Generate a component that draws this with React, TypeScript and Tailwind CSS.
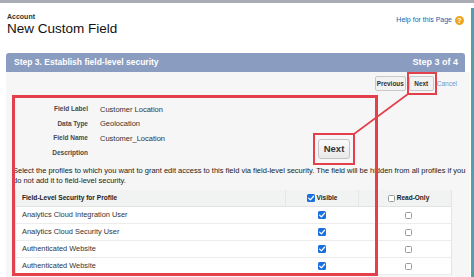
import React from "react";

const Checked = () => (
  <span className="inline-flex w-[8px] h-[8px] rounded-[1.5px] bg-[#1a6fe0] items-center justify-center">
    <svg viewBox="0 0 10 10" className="w-[8px] h-[8px]">
      <path d="M2 5.2 L4.2 7.3 L8.2 2.8" fill="none" stroke="#fff" strokeWidth="1.6" strokeLinecap="round" strokeLinejoin="round" />
    </svg>
  </span>
);

const Unchecked = () => (
  <span className="inline-block w-[7px] h-[7px] rounded-[1.5px] border border-[#9a9a9a] bg-white" />
);

const rows = [
  "Analytics Cloud Integration User",
  "Analytics Cloud Security User",
  "Authenticated Website",
  "Authenticated Website",
];

const fields: [string, string][] = [
  ["Field Label", "Customer Location"],
  ["Data Type", "Geolocation"],
  ["Field Name", "Customer_Location"],
  ["Description", ""],
];

export default function App() {
  return (
    <div
      className="relative w-[474px] h-[277px] overflow-hidden bg-white flex flex-col"
      style={{ fontFamily: '"Liberation Sans", Arial, sans-serif' }}
    >
      <div className="h-[3px] bg-[#a9adb3] shrink-0" />
      <div className="flex flex-1">
        <div className="w-[471px] flex flex-col">
          {/* header */}
          <div className="flex justify-between items-start pt-[10px] pl-[7px] pr-[7px]">
            <div className="flex flex-col">
              <div className="text-[7px] leading-[8px] text-[#333] font-bold">Account</div>
              <div className="text-[13.5px] leading-[16px] text-[#111]">New Custom Field</div>
            </div>
            <div className="flex items-center gap-[3px] h-[14px]">
              <span className="text-[7px] text-[#1d5ea8]">Help for this Page</span>
              <span className="w-[9px] h-[9px] rounded-full bg-[#eea41c] text-white text-[7px] font-bold leading-[9px] text-center">?</span>
            </div>
          </div>
          {/* step bar */}
          <div className="mt-[16px] ml-[6px] w-[459px] h-[19px] bg-[#8a9cc0] rounded-t-[3px] flex items-center justify-between pl-[8px] pr-[7px]">
            <span className="text-[8.5px] font-bold text-white">Step 3. Establish field-level security</span>
            <span className="text-[9px] font-bold text-white">Step 3 of 4</span>
          </div>
          {/* body */}
          <div className="ml-[6px] w-[464px] flex-1 bg-[#f6f6f6] flex flex-col">
            <div className="mt-[4px] h-[15px] flex items-center justify-end gap-[3px] pr-[13px]">
              <span className="h-[15px] w-[31px] flex items-center justify-center rounded-[2px] border border-[#c8c8c8] bg-[#f2f2f2] text-[6.4px] font-bold text-[#333]">Previous</span>
              <span className="h-[15px] w-[25px] flex items-center justify-center rounded-[2px] border border-[#c8c8c8] bg-[#f2f2f2] text-[6.4px] font-bold text-[#333]">Next</span>
              <span className="text-[6.5px] text-[#6d97d0]">Cancel</span>
            </div>
            <div className="mt-[11px] flex flex-col">
              {fields.map(([l, v]) => (
                <div key={l} className="h-[14.5px] flex items-center gap-[12px]">
                  <span className="w-[82px] text-right text-[6.5px] font-bold text-[#4a4a4a]">{l}</span>
                  <span className="text-[7.5px] text-[#333]">{v}</span>
                </div>
              ))}
            </div>
            <div className="mt-[6px] pl-[7px] text-[7.5px] leading-[10px] text-[#222] whitespace-nowrap">
              <div>Select the profiles to which you want to grant edit access to this field via field-level security. The field will be hidden from all profiles if you</div>
              <div>do not add it to field-level security.</div>
            </div>
            <div className="mt-[4px] ml-[9px] w-[437px] bg-white border-l border-r border-[#e4e4e4]">
              <div className="h-[17px] bg-[#f1f2f2] flex items-center border-b border-[#e2e2e2]">
                <div className="w-[269px] pl-[6px] text-[6.6px] font-bold text-[#222]">Field-Level Security for Profile</div>
                <div className="w-[73px] h-full flex items-center justify-center gap-[2px] border-l border-[#e6e6e6]">
                  <Checked />
                  <span className="text-[6.5px] font-bold text-[#222]">Visible</span>
                </div>
                <div className="flex-1 h-full flex items-center justify-center gap-[2px] pl-[7px] border-l border-[#e6e6e6]">
                  <Unchecked />
                  <span className="text-[6.5px] font-bold text-[#222]">Read-Only</span>
                </div>
              </div>
              {rows.map((r, i) => (
                <div key={i} className="h-[17px] flex items-center border-b border-[#ececec]">
                  <div className="w-[269px] pl-[6px] text-[7.4px] text-[#333]">{r}</div>
                  <div className="w-[73px] flex items-center justify-center">
                    <Checked />
                  </div>
                  <div className="flex-1 flex items-center justify-center pl-[7px]">
                    <Unchecked />
                  </div>
                </div>
              ))}
            </div>
          </div>
        </div>
        <div className="w-[3px] mt-[5px] bg-[#4fa0a9]" />
      </div>

      {/* annotations */}
      <div className="absolute left-[12px] top-[95px] w-[366px] h-[181px] border-[3px] border-[#e3404c] pointer-events-none" />
      <div className="absolute left-[407px] top-[72px] w-[30px] h-[23px] border-2 border-[#e3404c]" />
      <div className="absolute left-[313px] top-[133px] w-[42px] h-[32px] border-2 border-[#e3404c] bg-[#f6f6f6] flex items-center justify-center">
        <span className="w-[32px] h-[20px] rounded-[3px] border border-[#c4c4c4] bg-gradient-to-b from-[#fbfbfb] to-[#e9e9e9] flex items-center justify-center text-[9.5px] font-bold text-[#333]">Next</span>
      </div>
      <svg className="absolute left-0 top-0 pointer-events-none" width="474" height="277">
        <line x1="408" y1="94" x2="354" y2="134" stroke="#e3404c" strokeWidth="1.6" />
      </svg>
    </div>
  );
}
